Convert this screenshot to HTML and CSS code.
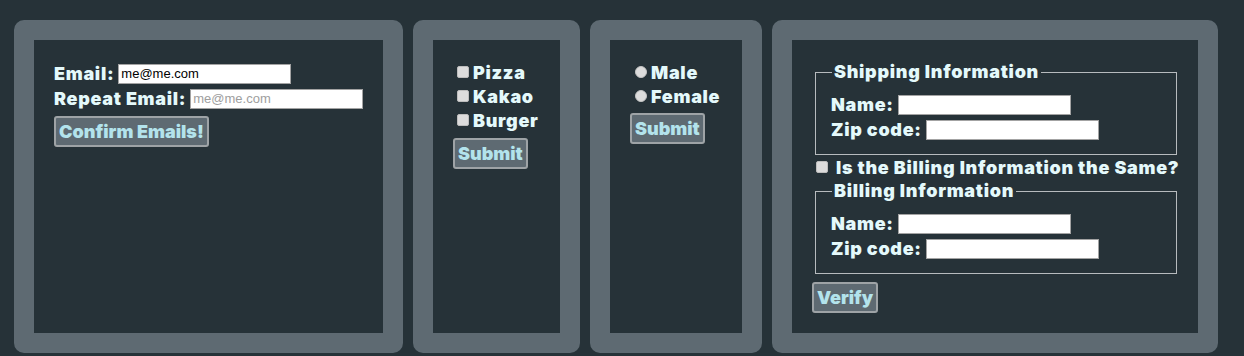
FILE: index.html
```html
<!DOCTYPE html>
<html lang="en">
<head>
<meta charset="utf-8">
<title>Forms</title>
<link rel="stylesheet" href="styles.css">
</head>
<body>
<main class="board">
  <section class="card card-email">
    <div class="row row-input"><span class="lbl">Email:</span><input class="field" type="text" value="me@me.com"></div>
    <div class="row row-input"><span class="lbl">Repeat Email:</span><input class="field" type="text" placeholder="me@me.com"></div>
    <button class="btn btn-email" type="button">Confirm Emails!</button>
  </section>

  <section class="card card-food">
    <label class="row row-check"><span class="box"></span>Pizza</label>
    <label class="row row-check"><span class="box"></span>Kakao</label>
    <label class="row row-check"><span class="box"></span>Burger</label>
    <button class="btn btn-food" type="button">Submit</button>
  </section>

  <section class="card card-gender">
    <label class="row row-check"><span class="dot"></span>Male</label>
    <label class="row row-check"><span class="dot"></span>Female</label>
    <button class="btn btn-gender" type="button">Submit</button>
  </section>

  <section class="card card-ship">
    <fieldset class="group">
      <legend class="legend">Shipping Information</legend>
      <div class="row row-input"><span class="lbl">Name:</span><input class="field" type="text"></div>
      <div class="row row-input"><span class="lbl">Zip code:</span><input class="field" type="text"></div>
    </fieldset>
    <label class="row row-same"><span class="box box-same"></span>Is the Billing Information the Same?</label>
    <fieldset class="group group-bill">
      <legend class="legend">Billing Information</legend>
      <div class="row row-input"><span class="lbl">Name:</span><input class="field" type="text"></div>
      <div class="row row-input"><span class="lbl">Zip code:</span><input class="field" type="text"></div>
    </fieldset>
    <button class="btn btn-verify" type="button">Verify</button>
  </section>
</main>
</body>
</html>
```

FILE: styles.css
```css
* { box-sizing: border-box; }

html, body {
  margin: 0;
  height: 100%;
  background: #263238;
}

body {
  font-family: "Inter", "Lato", "Liberation Sans", sans-serif;
  font-weight: 900;
  font-size: 18px;
  letter-spacing: 0.7px;
  color: #e4f9fb;
}

.board {
  display: flex;
  align-items: flex-start;
  gap: 10px;
  padding: 20px 0 0 14px;
}

.card {
  height: 333px;
  border: 20px solid #5e6a72;
  border-radius: 10px;
  background: #263238;
  padding: 20px;
  display: flex;
  flex-direction: column;
  align-items: flex-start;
}

.card-email { width: 389px; padding-top: 21px; }
.card-food { width: 167px; }
.card-gender { width: 172px; }
.card-ship { width: 446px; }

.row {
  display: flex;
  align-items: center;
  white-space: nowrap;
}

.row-input { height: 25px; }
.row-check { height: 24px; }

.lbl { margin-right: 4px; }

.field {
  width: 173px;
  height: 20px;
  border: 1px solid #a3a3a3;
  background: #fff;
  padding: 0 2px;
  font-family: "Liberation Sans", Arial, sans-serif;
  font-weight: 400;
  font-size: 13px;
  letter-spacing: 0;
  color: #000;
  outline: none;
}

.field::placeholder { color: #9e9e9e; }

.box {
  width: 12px;
  height: 12px;
  margin: 0 4px 0 4px;
  background: #dcdcdc;
  border: 1px solid #bdbdbd;
  border-radius: 2px;
}

.dot {
  width: 12px;
  height: 12px;
  margin: 0 4px 0 5px;
  background: #dcdcdc;
  border: 1px solid #c4c4c4;
  border-radius: 50%;
}

.btn {
  font-family: inherit;
  font-weight: 900;
  font-size: 18px;
  letter-spacing: 0;
  color: #b3e3ec;
  background: #5e6a72;
  border: 2px solid #9ea3a6;
  border-radius: 3px;
  height: 31px;
  padding: 0 3px;
  line-height: 27px;
}

.btn-email { margin-top: 5px; }
.btn-food { margin-top: 6px; }
.btn-gender { margin-top: 5px; }
.btn-verify { margin-top: 8px; }

.group {
  width: 362px;
  margin: 0 0 0 3px;
  border: 1px solid #b7bbbe;
  padding: 8px 14px 12px 15px;
}

.legend {
  padding: 0 2px;
  margin-left: 1px;
  line-height: 24px;
}

.row-same {
  height: 24px;
}

.box-same {
  margin: 0 8px 0 4px;
}
```
